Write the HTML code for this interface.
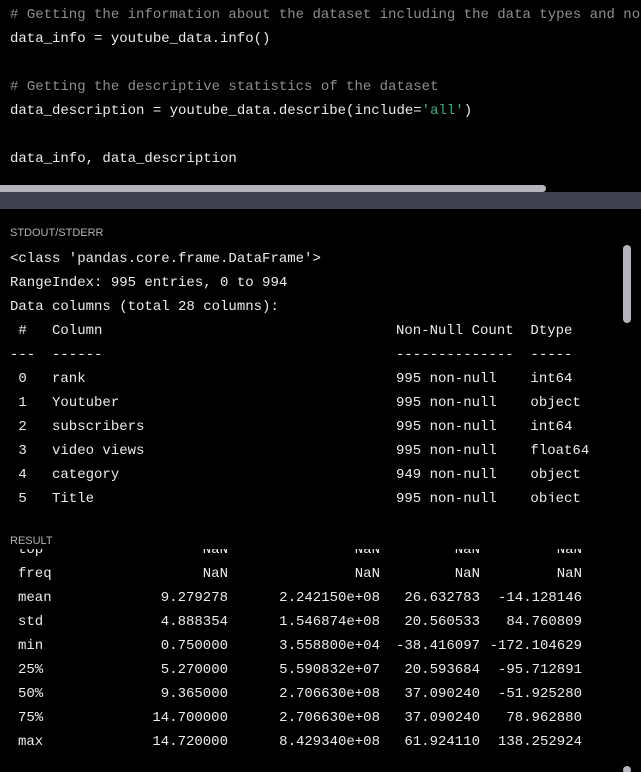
<!DOCTYPE html>
<html><head><meta charset="utf-8"><style>
html,body{margin:0;padding:0;background:#000;width:641px;height:772px;overflow:hidden;position:relative}
.m{font-family:"Liberation Mono",monospace;font-size:14px;color:#ececec;white-space:pre;position:absolute;line-height:24px}
.c{color:#8e8e8e}
.g{color:#2fb08a}
.lbl{position:absolute;left:10px;font-family:"Liberation Sans",sans-serif;font-size:11px;color:#b4b4b4}
.r{position:absolute;text-align:right}
</style></head><body>
<div class="m" style="left:10px;top:3px"><span class="c"># Getting the information about the dataset including the data types and no</span>
data_info = youtube_data.info()

<span class="c"># Getting the descriptive statistics of the dataset</span>
data_description = youtube_data.describe(include=<span class="g">'all'</span>)

data_info, data_description</div>
<div style="position:absolute;left:0;top:185px;width:546px;height:7px;background:#b4b4bc;border-radius:0 4px 4px 0"></div>
<div style="position:absolute;left:0;top:192px;width:641px;height:17px;background:#40414f"></div>
<div class="lbl" style="top:227px">STDOUT/STDERR</div>
<div style="position:absolute;left:0;top:246px;width:641px;height:256px;overflow:hidden">
<div class="m" style="left:10px;top:1px">&lt;class 'pandas.core.frame.DataFrame'&gt;
RangeIndex: 995 entries, 0 to 994
Data columns (total 28 columns):
 #   Column
---  ------
 0   rank
 1   Youtuber
 2   subscribers
 3   video views
 4   category
 5   Title</div>
<div class="m" style="left:396px;top:73px">Non-Null Count  Dtype
--------------  -----
995 non-null    int64
995 non-null    object
995 non-null    int64
995 non-null    float64
949 non-null    object
995 non-null    object</div>
</div>
<div style="position:absolute;left:623px;top:245px;width:8px;height:78px;background:#b4b4bc;border-radius:4px"></div>
<div class="lbl" style="top:535px">RESULT</div>
<div style="position:absolute;left:0;top:549px;width:641px;height:210px;overflow:hidden">
<div class="m" style="left:18px;top:-11px">top
freq
mean
std
min
25%
50%
75%
max</div>
<div class="m r" style="right:413px;top:-11px">NaN
NaN
9.279278
4.888354
0.750000
5.270000
9.365000
14.700000
14.720000</div>
<div class="m r" style="right:261px;top:-11px">NaN
NaN
2.242150e+08
1.546874e+08
3.558800e+04
5.590832e+07
2.706630e+08
2.706630e+08
8.429340e+08</div>
<div class="m r" style="right:161px;top:-11px">NaN
NaN
26.632783
20.560533
-38.416097
20.593684
37.090240
37.090240
61.924110</div>
<div class="m r" style="right:59px;top:-11px">NaN
NaN
-14.128146
84.760809
-172.104629
-95.712891
-51.925280
78.962880
138.252924</div>
</div>
<div style="position:absolute;left:623px;top:766px;width:8px;height:8px;background:#b4b4bc;border-radius:4px"></div>
</body></html>
